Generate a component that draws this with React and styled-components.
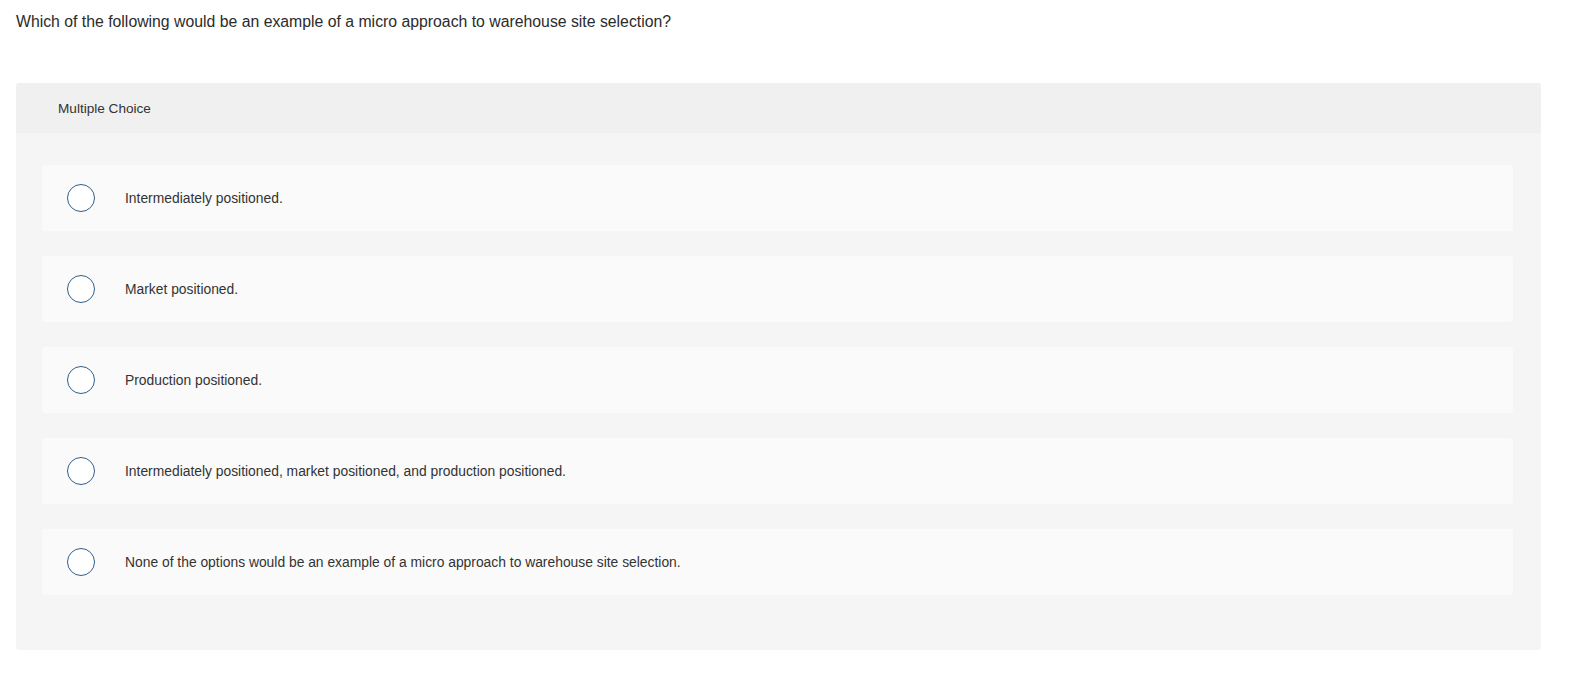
import React from "react";
import styled, {createGlobalStyle} from "styled-components";

const GlobalStyle = createGlobalStyle`
  body {
    margin: 0;
    background: #ffffff;
    font-family: "Liberation Sans", Arial, sans-serif;
    color: #333333;
  }
`;

const Page = styled.div`
  padding: 12px 0 0 16px;
`;

const Question = styled.p`
  margin: 0;
  font-size: 15.8px;
  line-height: 20px;
  color: #2b2b2b;
`;

const Panel = styled.section`
  width: 1525px;
  margin-top: 51px;
  background: #f5f5f5;
  border-radius: 3px;
  overflow: hidden;
`;

const PanelHeader = styled.div`
  height: 50px;
  display: flex;
  align-items: center;
  padding-left: 42px;
  background: #f0f0f0;
  font-size: 13.6px;
  color: #333333;
`;

const Options = styled.div`
  display: flex;
  flex-direction: column;
  gap: 25px;
  padding: 32px 28px 55px 26px;
`;

const Option = styled.label`
  height: 66px;
  display: flex;
  align-items: center;
  padding-left: 25px;
  background: #fafafa;
  border-radius: 3px;
  cursor: pointer;
`;

const Radio = styled.span`
  width: 28px;
  height: 28px;
  box-sizing: border-box;
  flex-shrink: 0;
  border: 1.6px solid #2f5e8c;
  border-radius: 50%;
  background: #ffffff;
  margin-right: 30px;
`;

const OptionText = styled.span`
  font-size: 13.85px;
  color: #333333;
`;

const choices = [
  "Intermediately positioned.",
  "Market positioned.",
  "Production positioned.",
  "Intermediately positioned, market positioned, and production positioned.",
  "None of the options would be an example of a micro approach to warehouse site selection.",
];

export default function App() {
  return (
    <Page>
      <GlobalStyle/>
      <Question>Which of the following would be an example of a micro approach to warehouse site selection?</Question>
      <Panel>
        <PanelHeader>Multiple Choice</PanelHeader>
        <Options>
          {choices.map((c) => (
            <Option key={c}>
              <Radio/>
              <OptionText>{c}</OptionText>
            </Option>
          ))}
        </Options>
      </Panel>
    </Page>
  );
}
